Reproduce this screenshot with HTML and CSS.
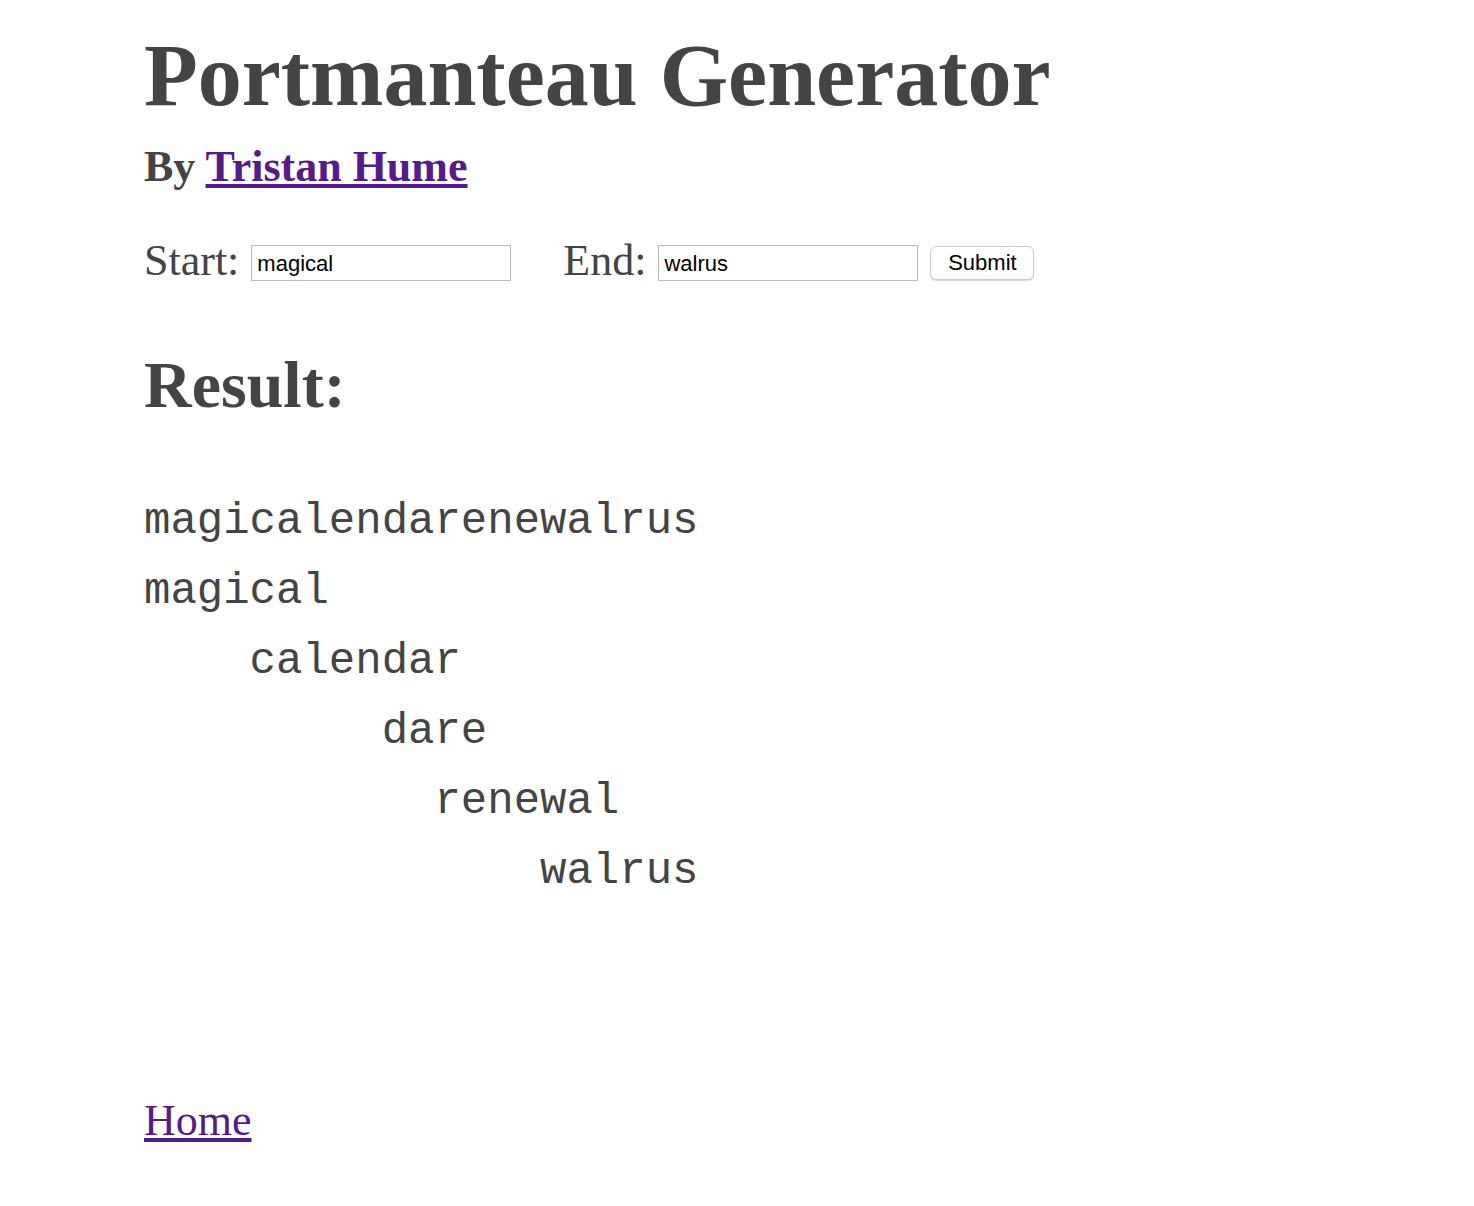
FILE: index.html
```html
<!DOCTYPE html>
<html>
<head>
<meta charset="utf-8">
<title>Portmanteau Generator</title>
<link rel="stylesheet" href="styles.css">
</head>
<body>
<div class="page">
  <h1 class="title">Portmanteau Generator</h1>
  <h3 class="byline">By <a href="#">Tristan Hume</a></h3>
  <form class="form">
    <label class="field">Start: <input class="text" type="text" value="magical"></label>
    <label class="field field-end">End: <input class="text" type="text" value="walrus"></label>
    <button class="submit" type="button">Submit</button>
  </form>
  <h2 class="result-title">Result:</h2>
  <pre class="result">magicalendarenewalrus
magical
    calendar
         dare
           renewal
               walrus</pre>
  <a class="home" href="#">Home</a>
</div>
</body>
</html>
```
FILE: styles.css
```css
html, body {
  margin: 0;
  padding: 0;
  background: #fff;
}
body {
  font-family: "Liberation Serif", "Times New Roman", serif;
  color: #444;
  font-size: 44px;
}
.page {
  padding: 32px 0 0 144px;
}
a {
  color: #551a8b;
}
.title {
  font-size: 88px;
  line-height: 88px;
  margin: 0;
  font-weight: bold;
}
.byline {
  font-size: 44px;
  line-height: 44px;
  margin: 25px 0 0 0;
  font-weight: bold;
}
.form {
  display: flex;
  align-items: center;
  margin: 49px 0 0 0;
  height: 44px;
}
.field {
  display: flex;
  align-items: center;
  font-size: 44px;
}
.field-end {
  margin-left: 52px;
}
.text {
  width: 260px;
  height: 36px;
  box-sizing: border-box;
  margin: 6px 0 0 12px;
  border: 1px solid #bbb;
  padding: 2px 5px 0;
  font-family: "Liberation Sans", Arial, sans-serif;
  font-size: 22px;
  color: #000;
}
.submit {
  margin: 6px 0 0 12px;
  height: 34px;
  width: 104px;
  border: 1px solid #ccc;
  border-radius: 6px;
  background: #fff;
  box-shadow: 0 1px 1px rgba(0,0,0,0.15);
  font-family: "Liberation Sans", Arial, sans-serif;
  font-size: 22px;
  color: #000;
  padding: 0;
}
.result-title {
  font-size: 66px;
  line-height: 66px;
  margin: 70px 0 0 0;
  font-weight: bold;
}
.result {
  font-family: "Liberation Mono", "Courier New", monospace;
  font-size: 44px;
  line-height: 70px;
  margin: 68px 0 0 0;
  color: #444;
}
.home {
  display: inline-block;
  font-size: 44px;
  line-height: 44px;
  margin-top: 193px;
}
```
